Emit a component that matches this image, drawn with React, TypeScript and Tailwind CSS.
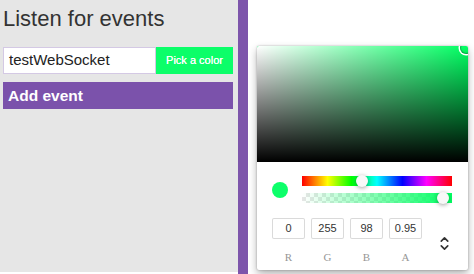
import { ChevronDown, ChevronUp } from 'lucide-react';

const PICKED = 'rgba(0,255,98,0.95)';

const FIELDS = [
  { label: 'R', value: '0' },
  { label: 'G', value: '255' },
  { label: 'B', value: '98' },
  { label: 'A', value: '0.95' },
];

function ChromePicker() {
  return (
    <div className="w-[211px] overflow-hidden rounded-[2px] bg-white shadow-[0_0_2px_rgba(0,0,0,0.3),0_4px_8px_rgba(0,0,0,0.3)]">
      {/* saturation */}
      <div className="relative h-[116px] bg-[#00ff62]">
        <div className="absolute inset-0 bg-[linear-gradient(to_right,#fff,rgba(255,255,255,0))]" />
        <div className="absolute inset-0 bg-[linear-gradient(to_top,#000,rgba(0,0,0,0))]" />
        <div className="absolute -right-[4px] -top-[4px] h-[12px] w-[12px] rounded-full shadow-[0_0_0_1.5px_#fff,inset_0_0_1px_1px_rgba(0,0,0,0.3)]" />
      </div>

      <div className="pl-[15px] pr-[16px] pb-[6px] pt-[14px]">
        <div className="flex items-start">
          <div className="w-[30px] pt-[6px]">
            <div className="h-[16px] w-[16px] rounded-full" style={{ backgroundColor: PICKED }} />
          </div>
          <div className="flex-1">
            <div className="relative h-[10px] bg-[linear-gradient(to_right,#f00_0%,#ff0_17%,#0f0_33%,#0ff_50%,#00f_67%,#f0f_83%,#f00_100%)]">
              <div className="absolute left-[54px] top-[-1px] h-[12px] w-[12px] rounded-full bg-[#f8f8f8] shadow-[0_1px_4px_rgba(0,0,0,0.37)]" />
            </div>
            <div className="relative mt-[7px] h-[10px] bg-[repeating-conic-gradient(#e6e6e6_0%_25%,#fff_0%_50%)] bg-[length:8px_8px]">
              <div className="absolute inset-0 bg-[linear-gradient(to_right,rgba(0,255,98,0),rgb(0,255,98))]" />
              <div className="absolute left-[135px] top-[-1px] h-[12px] w-[12px] rounded-full bg-[#f8f8f8] shadow-[0_1px_4px_rgba(0,0,0,0.37)]" />
            </div>
          </div>
        </div>

        <div className="mt-[15px] flex">
          {FIELDS.map((f) => (
            <div key={f.label} className="w-[39px] pr-[6px]">
              <div className="flex h-[21px] items-center justify-center rounded-[2px] text-[11px] text-[#333] shadow-[inset_0_0_0_1px_#dadada] font-['Liberation_Sans',Arial,sans-serif]">
                {f.value}
              </div>
              <div className="mt-[11px] text-center text-[11px] leading-[14px] text-[#969696] font-['Liberation_Serif',serif]">
                {f.label}
              </div>
            </div>
          ))}
          <div className="flex flex-1 flex-col items-end pt-[15px] pr-[1px] text-[#333]">
            <ChevronUp size={13} strokeWidth={3} />
            <ChevronDown size={13} strokeWidth={3} className="-mt-[5px]" />
          </div>
        </div>
      </div>
    </div>
  );
}

export default function App() {
  return (
    <div className="flex h-[274px] w-[474px] bg-white font-['Liberation_Sans',Arial,sans-serif]">
      <div className="h-[272px] w-[238px] bg-[#e6e6e6] pl-[3px] pr-[5px]">
        <h1 className="pt-[5px] text-[22px] leading-[28px] text-[#333]">Listen for events</h1>
        <div className="mt-[14px] flex h-[27px]">
          <div className="flex flex-1 items-center border border-[#d4c9e4] bg-white pl-[5px] text-[15px] text-[#222]">
            testWebSocket
          </div>
          <div className="flex w-[77px] items-center justify-center text-[11px] text-white [text-shadow:0_0_0.4px_#fff]" style={{ backgroundColor: PICKED }}>
            Pick a color
          </div>
        </div>
        <div className="mt-[8px] flex h-[27px] items-center bg-[#7b52ab] pl-[5px] text-[15.5px] font-bold text-white">
          Add event
        </div>
      </div>
      <div className="w-[10px] bg-[#7d55ab]" />
      <div className="flex-1 pl-[9px] pt-[46px]">
        <ChromePicker />
      </div>
    </div>
  );
}
